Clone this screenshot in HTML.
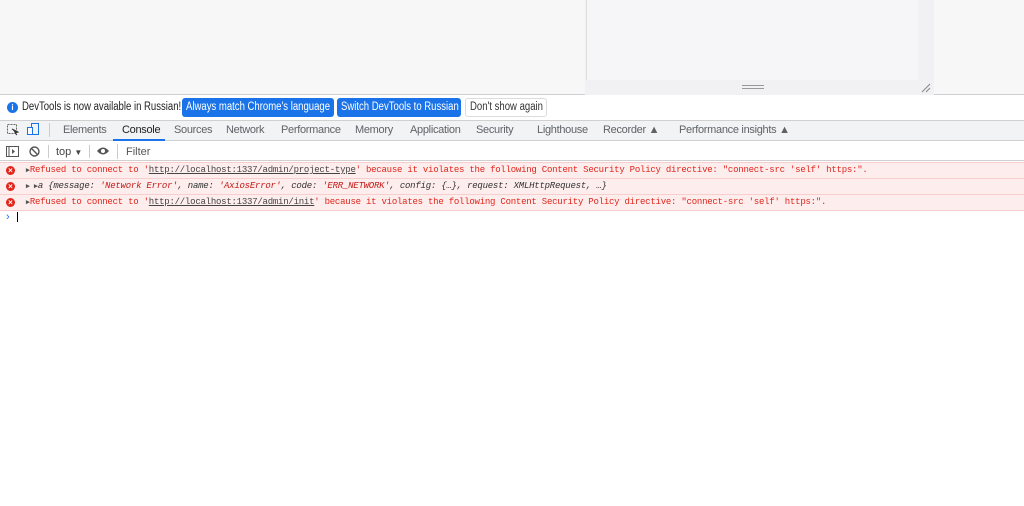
<!DOCTYPE html>
<html><head><style>
*{margin:0;padding:0;box-sizing:border-box}
body{width:1024px;height:506px;overflow:hidden;background:#fff;font-family:"Liberation Sans",sans-serif;font-size:11px;color:#333;position:relative}
.abs{position:absolute}
.top{left:0;top:0;width:1024px;height:95px;background:#f7f7f8;border-bottom:1px solid #cfd0d2}
.panel{left:585px;top:0;width:349px;height:95px;background:#f1f1f3}
.pin{left:586px;top:0;width:332px;height:80px;background:#f6f6f8;border-left:1px solid #ddd}
.btn{position:absolute;top:98px;height:19px;border-radius:3px;font-size:11.5px;line-height:19px;overflow:hidden;white-space:nowrap}
.btn span,.sx{display:inline-block;transform:scaleX(0.83);transform-origin:left center;white-space:nowrap}
.blue{background:#1a73e8;color:#fff}
.tabs{left:0;top:120px;width:1024px;height:21px;background:#f1f3f4;border-top:1px solid #d0d0d0;border-bottom:1px solid #d0d0d0}
.tab{position:absolute;top:124px;font-size:11px;color:#5f6368;letter-spacing:-0.3px}
.tb{left:0;top:142px;width:1024px;height:19px;border-bottom:1px solid #d0d0d0}
.msg{position:absolute;left:0;width:1024px;height:16px;background:#fdeded;border-top:1px solid #f7cdcd;font-family:"Liberation Mono",monospace;font-size:9px;letter-spacing:-0.23px;line-height:15px;color:#e1251b;white-space:pre}
.ic{position:absolute;left:6px;top:3px;width:9px;height:9px;border-radius:50%;background:#e1251b;color:#fff;font-size:8px;line-height:9px;text-align:center;font-family:"Liberation Sans",sans-serif;font-weight:bold;letter-spacing:0}
.tri{color:#555;font-size:7px}
u{color:#444}
.obj{color:#333;font-style:italic}
.s{color:#c41a16}
</style></head><body>
<div class="abs top"></div>
<div class="abs panel"></div>
<div class="abs pin"></div>
<div class="abs" style="left:742px;top:85px;width:22px;height:1px;background:#999"></div>
<div class="abs" style="left:742px;top:88px;width:22px;height:1px;background:#999"></div>
<svg class="abs" style="left:920px;top:82px" width="12" height="12"><path d="M2 10 L10 2 M6 10 L10 6" stroke="#888" stroke-width="1"/></svg>

<div class="abs" style="left:7px;top:102px;width:11px;height:11px;border-radius:50%;background:#1a73e8;color:#fff;font-size:8px;line-height:11px;text-align:center;font-weight:bold">i</div>
<div class="abs" style="left:22px;top:101px;font-size:11.5px;color:#222"><span class="sx">DevTools is now available in Russian!</span></div>
<div class="btn blue" style="left:182px;width:152px;padding-left:4px"><span>Always match Chrome's language</span></div>
<div class="btn blue" style="left:337px;width:124px;padding-left:4px"><span>Switch DevTools to Russian</span></div>
<div class="btn" style="left:465px;width:82px;padding-left:4px;border:1px solid #dadce0;color:#333;line-height:17px"><span>Don't show again</span></div>

<div class="abs tabs"></div>
<svg class="abs" style="left:7px;top:124px" width="12" height="12"><rect x="0.5" y="0.5" width="9" height="9" fill="none" stroke="#666" stroke-dasharray="2 1"/><path d="M5 5 L11 8 L8 9 L10 11" stroke="#333" fill="#333"/></svg>
<svg class="abs" style="left:27px;top:123px" width="13" height="13"><rect x="4.5" y="0.5" width="7" height="11" fill="none" stroke="#1a73e8"/><rect x="0.5" y="4.5" width="5" height="7" fill="#fff" stroke="#1a73e8"/></svg>
<div class="abs" style="left:49px;top:123px;width:1px;height:14px;background:#ccc"></div>
<div class="tab" style="left:63px">Elements</div>
<div class="tab" style="left:122px;color:#222">Console</div>
<div class="abs" style="left:113px;top:139px;width:52px;height:2px;background:#1a73e8"></div>
<div class="tab" style="left:174px">Sources</div>
<div class="tab" style="left:226px">Network</div>
<div class="tab" style="left:281px">Performance</div>
<div class="tab" style="left:355px">Memory</div>
<div class="tab" style="left:410px">Application</div>
<div class="tab" style="left:476px">Security</div>
<div class="tab" style="left:537px">Lighthouse</div>
<div class="tab" style="left:603px">Recorder ▲</div>
<div class="tab" style="left:679px">Performance insights ▲</div>

<div class="abs tb"></div>
<svg class="abs" style="left:6px;top:146px" width="13" height="11"><rect x="0.5" y="0.5" width="12" height="10" fill="none" stroke="#555"/><path d="M3 1V10" stroke="#555"/><path d="M6 3L9 5.5L6 8Z" fill="#555"/></svg>
<svg class="abs" style="left:29px;top:146px" width="11" height="11"><circle cx="5.5" cy="5.5" r="4.5" fill="none" stroke="#555" stroke-width="1.4"/><path d="M2.3 2.3L8.7 8.7" stroke="#555" stroke-width="1.4"/></svg>
<div class="abs" style="left:48px;top:145px;width:1px;height:13px;background:#ccc"></div>
<div class="abs" style="left:56px;top:146px;color:#444">top <span style="font-size:8px">▼</span></div>
<div class="abs" style="left:89px;top:145px;width:1px;height:13px;background:#ccc"></div>
<svg class="abs" style="left:96px;top:146px" width="14" height="10"><path d="M1 5Q7 -2 13 5Q7 12 1 5Z" fill="#555"/><circle cx="7" cy="5" r="2" fill="#fff"/></svg>
<div class="abs" style="left:117px;top:144px;width:1px;height:15px;background:#ccc"></div>
<div class="abs" style="left:126px;top:146px;color:#555">Filter</div>

<div class="msg" style="top:162px"><div class="ic">×</div>     <span class="tri">▶</span>Refused to connect to '<u>http://localhost:1337/admin/project-type</u>' because it violates the following Content Security Policy directive: "connect-src 'self' https:".</div>
<div class="msg" style="top:178px"><div class="ic">×</div>     <span class="tri">▶ ▶</span><span class="obj">a {message: <span class="s">'Network Error'</span>, name: <span class="s">'AxiosError'</span>, code: <span class="s">'ERR_NETWORK'</span>, config: {…}, request: XMLHttpRequest, …}</span></div>
<div class="msg" style="top:194px;border-bottom:1px solid #f7cdcd;height:17px"><div class="ic">×</div>     <span class="tri">▶</span>Refused to connect to '<u>http://localhost:1337/admin/init</u>' because it violates the following Content Security Policy directive: "connect-src 'self' https:".</div>
<div class="abs" style="left:6px;top:211px;color:#1a73e8;font-size:11px">›</div>
<div class="abs" style="left:17px;top:212px;width:1px;height:10px;background:#000"></div>
</body></html>
